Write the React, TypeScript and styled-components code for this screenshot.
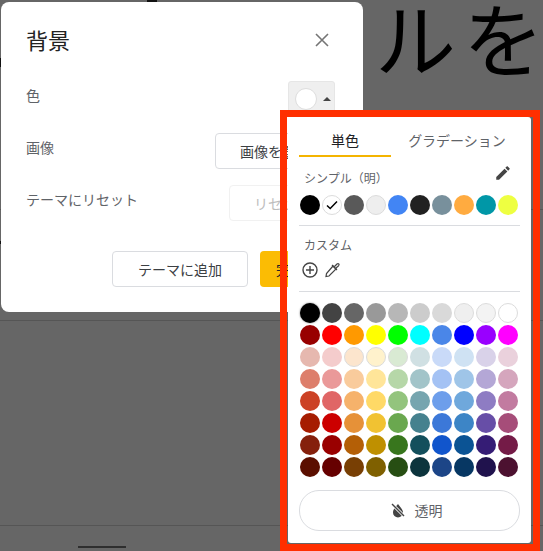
import styled, { createGlobalStyle } from 'styled-components';

const GlobalStyle = createGlobalStyle`
  html, body {
    margin: 0;
    padding: 0;
  }
  body {
    font-family: "Roboto", "Noto Sans CJK JP", sans-serif;
  }
  * {
    box-sizing: border-box;
  }
`;

const Page = styled.div`
  position: relative;
  width: 543px;
  height: 551px;
  overflow: hidden;
  background: #666666;
`;

const BigText = styled.div`
  position: absolute;
  left: 375px;
  top: -14px;
  font-size: 81px;
  line-height: 100px;
  letter-spacing: 7px;
  color: #000;
  font-family: "Noto Sans CJK JP", sans-serif;
  white-space: nowrap;
`;

const BackLine = styled.div<{ $top: number }>`
  position: absolute;
  left: 0;
  right: 0;
  top: ${p => p.$top}px;
  height: 1px;
  background: #555;
`;

const Stub = styled.div<{ $left: number; $top: number; $w: number; $h: number }>`
  position: absolute;
  left: ${p => p.$left}px;
  top: ${p => p.$top}px;
  width: ${p => p.$w}px;
  height: ${p => p.$h}px;
  background: #111;
`;

const ScrollMark = styled.div`
  position: absolute;
  left: 78px;
  top: 546px;
  width: 48px;
  height: 2px;
  background: #2e2e2e;
`;

const Dialog = styled.div`
  position: absolute;
  left: 1px;
  top: 2px;
  width: 362px;
  height: 310px;
  background: #fff;
  border-radius: 8px;
  padding: 0 25px;
  display: flex;
  flex-direction: column;
`;

const DialogHeader = styled.div`
  height: 71px;
  padding-top: 4px;
  display: flex;
  align-items: center;
  justify-content: space-between;
`;

const Title = styled.div`
  font-size: 22px;
  margin-bottom: 2px;
  color: #222;
`;

const CloseIcon = styled.svg`
  width: 14px;
  height: 14px;
  margin-right: 9px;
  stroke: #757575;
  stroke-width: 1.6;
  fill: none;
`;

const Row = styled.div`
  height: 52px;
  display: flex;
  align-items: center;
  justify-content: space-between;
  font-size: 14px;
  color: #5f6368;
`;

const RowLabel = styled.div`
  margin-top: -8px;
`;

const SwatchButton = styled.div`
  width: 47px;
  height: 36px;
  margin-right: 3px;
  background: #efefef;
  border: 1px solid #e6e6e6;
  border-radius: 3px;
  display: flex;
  align-items: center;
  padding-left: 6px;
  gap: 6px;
`;

const SwatchDot = styled.div`
  width: 22px;
  height: 22px;
  border-radius: 50%;
  background: #fff;
  border: 1px solid #ddd;
`;

const Caret = styled.div`
  width: 0;
  height: 0;
  border-left: 4px solid transparent;
  border-right: 4px solid transparent;
  border-bottom: 4px solid #444;
`;

const OutlineButton = styled.div<{ $width: number; $disabled?: boolean }>`
  width: ${p => p.$width}px;
  height: 36px;
  flex: none;
  border: 1px solid ${p => (p.$disabled ? '#f1f1f1' : '#dadce0')};
  border-radius: 4px;
  background: #fff;
  color: ${p => (p.$disabled ? '#bdbdbd' : '#3c4043')};
  font-size: 14px;
  display: flex;
  align-items: center;
  justify-content: center;
`;

const SideButton = styled(OutlineButton)`
  margin-right: -25px;
  justify-content: flex-start;
  padding-left: 24px;
  white-space: nowrap;
`;

const Footer = styled.div`
  margin-top: 22px;
  margin-right: -25px;
  display: flex;
  gap: 12px;
  padding-left: 86px;
`;

const PrimaryButton = styled.div`
  width: 70px;
  height: 36px;
  background: #fbbc04;
  border-radius: 4px;
  color: #202124;
  font-size: 14px;
  display: flex;
  align-items: center;
  padding-left: 16px;
`;

const RedFrame = styled.div`
  position: absolute;
  left: 280px;
  top: 110px;
  width: 260px;
  height: 441px;
  border: 7px solid #ff2f00;
  padding-right: 2px;
  padding-bottom: 1px;
`;

const Popup = styled.div`
  background: #fff;
  height: 100%;
  margin-left: 1px;
  border-radius: 0 3px 3px 3px;
  padding: 0 11px;
  display: flex;
  flex-direction: column;
`;

const Tabs = styled.div`
  height: 40px;
  display: flex;
`;

const Tab = styled.div<{ $active?: boolean; $width: number }>`
  flex: none;
  width: ${p => p.$width}px;
  height: 40px;
  padding-top: 8px;
  display: flex;
  align-items: center;
  justify-content: center;
  font-size: 14px;
  color: ${p => (p.$active ? '#202124' : '#5f6368')};
  border-bottom: 2px solid ${p => (p.$active ? '#f4b400' : 'transparent')};
  white-space: nowrap;
`;

const SectionHead = styled.div`
  height: 38px;
  padding: 3px 8px 0 5px;
  display: flex;
  align-items: center;
  justify-content: space-between;
  font-size: 12px;
  color: #5f6368;
`;

const EditIcon = styled.svg`
  width: 18px;
  height: 18px;
  margin-bottom: 10px;
  fill: #444;
`;

const Swatches = styled.div`
  display: grid;
  grid-template-columns: repeat(10, 20px);
  grid-auto-rows: 20px;
  gap: 2px;
  padding-left: 1px;
`;

const Swatch = styled.div<{ $color: string; $ring?: boolean; $glow?: boolean }>`
  width: 20px;
  height: 20px;
  border-radius: 50%;
  background: ${p => p.$color};
  border: ${p => (p.$ring ? '1px solid #dcdcdc' : 'none')};
  box-shadow: ${p => (p.$glow ? '0 0 2px rgba(0, 0, 0, 0.6)' : 'none')};
  display: flex;
  align-items: center;
  justify-content: center;
`;

const Divider = styled.div<{ $top: number }>`
  height: 1px;
  background: #dadce0;
  margin-top: ${p => p.$top}px;
`;

const CustomHead = styled(SectionHead)`
  height: 30px;
  padding: 6px 0 0 5px;
`;

const CustomTools = styled.div`
  display: flex;
  gap: 4px;
  align-items: center;
  height: 24px;
  padding-left: 2px;
  margin-top: 2px;
`;

const Grid = styled(Swatches)`
  margin-top: 11px;
`;

const ClearButton = styled.div`
  margin-top: 13px;
  height: 41px;
  border: 1px solid #dadce0;
  border-radius: 20px;
  padding: 0 0 2px 13px;
  display: flex;
  align-items: center;
  justify-content: center;
  gap: 9px;
  font-size: 14px;
  color: #5f6368;
`;

const Simple = ['#000000', '#ffffff', '#595959', '#eeeeee', '#4285f4', '#212121', '#78909c', '#ffab40', '#0097a7', '#eeff41'];

const Palette = [
  '#000000', '#434343', '#666666', '#999999', '#b7b7b7', '#cccccc', '#d9d9d9', '#efefef', '#f3f3f3', '#ffffff',
  '#980000', '#ff0000', '#ff9900', '#ffff00', '#00ff00', '#00ffff', '#4a86e8', '#0000ff', '#9900ff', '#ff00ff',
  '#e6b8af', '#f4cccc', '#fce5cd', '#fff2cc', '#d9ead3', '#d0e0e3', '#c9daf8', '#cfe2f3', '#d9d2e9', '#ead1dc',
  '#dd7e6b', '#ea9999', '#f9cb9c', '#ffe599', '#b6d7a8', '#a2c4c9', '#a4c2f4', '#9fc5e8', '#b4a7d6', '#d5a6bd',
  '#cc4125', '#e06666', '#f6b26b', '#ffd966', '#93c47d', '#76a5af', '#6d9eeb', '#6fa8dc', '#8e7cc3', '#c27ba0',
  '#a61c00', '#cc0000', '#e69138', '#f1c232', '#6aa84f', '#45818e', '#3c78d8', '#3d85c6', '#674ea7', '#a64d79',
  '#85200c', '#990000', '#b45f06', '#bf9000', '#38761d', '#134f5c', '#1155cc', '#0b5394', '#351c75', '#741b47',
  '#5b0f00', '#660000', '#783f04', '#7f6000', '#274e13', '#0c343d', '#1c4587', '#073763', '#20124d', '#4c1130',
];

const Ringed = ['#ffffff', '#efefef', '#f3f3f3', '#eeeeee', '#fce5cd', '#fff2cc', '#d9ead3'];

const App = () => {
  return (
    <Page>
      <GlobalStyle />
      <BigText>ルを</BigText>
      <BackLine $top={209} />
      <BackLine $top={320} />
      <BackLine $top={525} />
      <Stub $left={147} $top={0} $w={10} $h={2} />
      <Stub $left={0} $top={58} $w={1} $h={9} />
      <Stub $left={0} $top={241} $w={1} $h={3} />
      <ScrollMark />
      <Dialog>
        <DialogHeader>
          <Title>背景</Title>
          <CloseIcon viewBox="0 0 14 14">
            <path d="M1 1 L13 13 M13 1 L1 13" />
          </CloseIcon>
        </DialogHeader>
        <Row>
          <RowLabel>色</RowLabel>
          <SwatchButton>
            <SwatchDot />
            <Caret />
          </SwatchButton>
        </Row>
        <Row>
          <RowLabel>画像</RowLabel>
          <SideButton $width={148}>画像を選択</SideButton>
        </Row>
        <Row>
          <RowLabel>テーマにリセット</RowLabel>
          <SideButton $width={134} $disabled>リセット</SideButton>
        </Row>
        <Footer>
          <OutlineButton $width={136}>テーマに追加</OutlineButton>
          <PrimaryButton>完了</PrimaryButton>
        </Footer>
      </Dialog>
      <RedFrame>
        <Popup>
          <Tabs>
            <Tab $active $width={92}>単色</Tab>
            <Tab $width={132}>グラデーション</Tab>
          </Tabs>
          <SectionHead>
            シンプル（明）
            <EditIcon viewBox="0 0 24 24">
              <path d="M3 17.25V21h3.75L17.81 9.94l-3.75-3.75L3 17.25zM20.71 7.04c.39-.39.39-1.02 0-1.41l-2.34-2.34c-.39-.39-1.02-.39-1.41 0l-1.83 1.83 3.75 3.75 1.83-1.83z" />
            </EditIcon>
          </SectionHead>
          <Swatches>
            {Simple.map((c, i) => (
              <Swatch key={i} $color={c} $ring={Ringed.includes(c)}>
                {i === 1 && (
                  <svg width="12" height="10" viewBox="0 0 12 10">
                    <path d="M1 5.5 L4.2 8.5 L11 1.5" fill="none" stroke="#000" strokeWidth="1.5" />
                  </svg>
                )}
              </Swatch>
            ))}
          </Swatches>
          <Divider $top={10} />
          <CustomHead>カスタム</CustomHead>
          <CustomTools>
            <svg width="18" height="18" viewBox="0 0 18 18" fill="none" stroke="#444" strokeWidth="1.4">
              <circle cx="9" cy="9" r="7" />
              <path d="M9 5 V13 M5 9 H13" />
            </svg>
            <svg width="18" height="18" viewBox="0 0 18 18" fill="none" stroke="#444" strokeWidth="1.2">
              <path d="M10 5 L13 8 L6 15 L3 15.5 L3.5 12.5 Z" />
              <path d="M9 4 L14 9 M11.5 5.5 L14 3 Q15 2.2 15.8 3 Q16.5 3.8 15.6 4.7 L13 7" />
            </svg>
          </CustomTools>
          <Divider $top={9} />
          <Grid>
            {Palette.map((c, i) => (
              <Swatch key={i} $color={c} $ring={Ringed.includes(c)} $glow={i === 0} />
            ))}
          </Grid>
          <ClearButton>
            <svg width="16" height="16" viewBox="0 0 16 16">
              <path d="M8 2 C10 5 13 7.5 13 10.5 A5 5 0 0 1 3 10.5 C3 8.5 4 7 5 5.5 Z" fill="#444" />
              <path d="M2 2 L14 14" stroke="#fff" strokeWidth="3" />
              <path d="M2 2 L14 14" stroke="#444" strokeWidth="1.4" />
            </svg>
            透明
          </ClearButton>
        </Popup>
      </RedFrame>
    </Page>
  );
};

export default App;
